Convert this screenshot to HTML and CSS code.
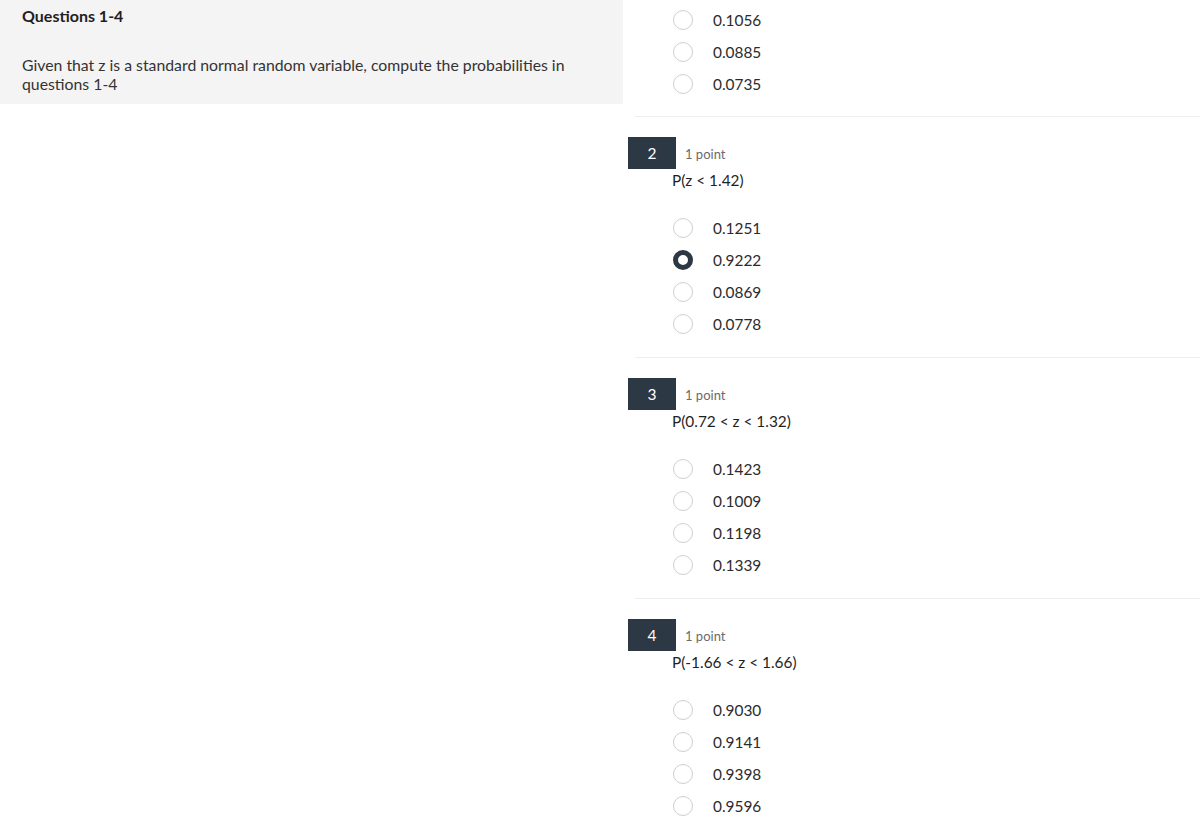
FILE: index.html
```html
<!DOCTYPE html>
<html>
<head>
  <title>Quiz</title>
  <link rel="stylesheet" href="styles.css">
</head>
<body>
  <div class="page">
    <div class="intro-column">
      <div class="intro">
        <h3>Questions 1-4</h3>
        <p>Given that z is a standard normal random variable, compute the probabilities in questions 1-4</p>
      </div>
    </div>

    <div class="questions">
      <div class="question first">
        <div class="options">
          <label class="option"><span class="radio"></span>0.1056</label>
          <label class="option"><span class="radio"></span>0.0885</label>
          <label class="option"><span class="radio"></span>0.0735</label>
        </div>
      </div>

      <div class="question">
        <div class="question-head">
          <span class="badge">2</span>
          <span class="points">1 point</span>
        </div>
        <div class="prompt">P(z &lt; 1.42)</div>
        <div class="options">
          <label class="option"><span class="radio"></span>0.1251</label>
          <label class="option"><span class="radio checked"></span>0.9222</label>
          <label class="option"><span class="radio"></span>0.0869</label>
          <label class="option"><span class="radio"></span>0.0778</label>
        </div>
      </div>

      <div class="question">
        <div class="question-head">
          <span class="badge">3</span>
          <span class="points">1 point</span>
        </div>
        <div class="prompt">P(0.72 &lt; z &lt; 1.32)</div>
        <div class="options">
          <label class="option"><span class="radio"></span>0.1423</label>
          <label class="option"><span class="radio"></span>0.1009</label>
          <label class="option"><span class="radio"></span>0.1198</label>
          <label class="option"><span class="radio"></span>0.1339</label>
        </div>
      </div>

      <div class="question">
        <div class="question-head">
          <span class="badge">4</span>
          <span class="points">1 point</span>
        </div>
        <div class="prompt">P(-1.66 &lt; z &lt; 1.66)</div>
        <div class="options">
          <label class="option"><span class="radio"></span>0.9030</label>
          <label class="option"><span class="radio"></span>0.9141</label>
          <label class="option"><span class="radio"></span>0.9398</label>
          <label class="option"><span class="radio"></span>0.9596</label>
        </div>
      </div>
    </div>
  </div>
</body>
</html>
```

FILE: styles.css
```css
body {
  margin: 0;
  font-family: Lato, 'Open Sans', sans-serif;
  color: #333;
  background: #ffffff;
  overflow: hidden;
}

.page {
  display: grid;
  grid-template-columns: 623px 1fr;
}

.intro {
  background: #f4f4f4;
  padding: 6px 22px 12px;
  height: 86px;
}

.intro h3 {
  margin: 0;
  font-size: 16px;
  font-weight: 700;
  color: #1f1f1f;
  line-height: 20px;
}

.intro p {
  margin: 29px 0 0;
  font-size: 15.8px;
  line-height: 19px;
  color: #333;
  width: 570px;
}

.questions {
  display: flex;
  flex-direction: column;
}

.question {
  padding: 20px 0 17px;
  border-top: 1px solid #eeeeee;
  margin-left: 12px;
}

.question.first {
  padding: 4px 0 16px;
  border-top: none;
}

.question-head {
  display: flex;
  align-items: center;
  gap: 9px;
  margin-left: -7px;
}

.badge {
  width: 48px;
  height: 32px;
  background: #2c3843;
  color: #ffffff;
  font-size: 15.5px;
  display: flex;
  align-items: center;
  justify-content: center;
}

.points {
  font-size: 13px;
  color: #6b6b6b;
  padding-top: 1px;
}

.prompt {
  margin: 1px 0 22px 37px;
  font-size: 15.4px;
  line-height: 20px;
  color: #1f1f1f;
}

.options {
  display: flex;
  flex-direction: column;
  margin-left: 38px;
}

.option {
  display: flex;
  align-items: center;
  gap: 20px;
  height: 32px;
  font-size: 15.4px;
  color: #2b2b2b;
}

.radio {
  width: 20px;
  height: 20px;
  box-sizing: border-box;
  border: 1px solid #cfcfcf;
  border-radius: 50%;
  background: #ffffff;
  flex-shrink: 0;
}

.radio.checked {
  border: 5.5px solid #2c3843;
}
```
